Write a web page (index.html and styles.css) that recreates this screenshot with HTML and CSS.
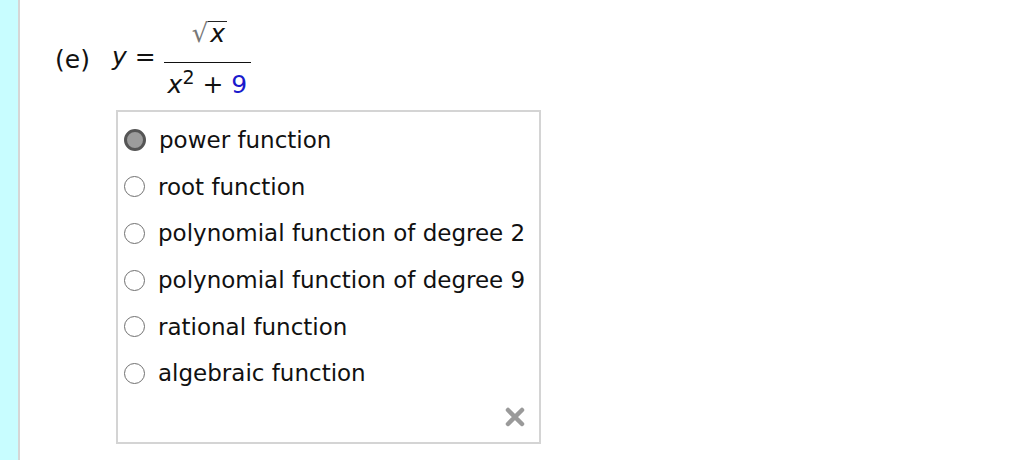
FILE: index.html
```html
<!DOCTYPE html>
<html lang="en">
<head>
    <meta charset="UTF-8">
    <meta name="viewport" content="width=device-width, initial-scale=1.0">
    <title>Question e</title>
    <link rel="stylesheet" href="styles.css">
</head>
<body>
    <div class="side-strip"></div>
    <div class="content">
        <div class="question">
            <span class="part-label">(e)</span>
            <span class="lhs"><i>y</i> =</span>
            <span class="fraction">
                <span class="numer"><span class="radical">&radic;</span><span class="radicand"><i>x</i></span></span>
                <span class="denom"><i>x</i><sup>2</sup> + <span class="blue">9</span></span>
            </span>
        </div>
        <div class="answer-box">
            <label class="option"><span class="radio checked"></span>power function</label>
            <label class="option"><span class="radio"></span>root function</label>
            <label class="option"><span class="radio"></span>polynomial function of degree 2</label>
            <label class="option"><span class="radio"></span>polynomial function of degree 9</label>
            <label class="option"><span class="radio"></span>rational function</label>
            <label class="option"><span class="radio"></span>algebraic function</label>
            <div class="mark-row">
                <svg width="20" height="20" viewBox="0 0 20 20">
                    <path d="M3 3 L17 17 M17 3 L3 17" stroke="#9a9a9a" stroke-width="4.5" stroke-linecap="round"/>
                </svg>
            </div>
        </div>
    </div>
</body>
</html>
```

FILE: styles.css
```css
body {
    margin: 0;
    padding: 0;
    background-color: white;
    display: flex;
    height: 460px;
    font-family: "DejaVu Sans", Verdana, sans-serif;
    color: #111;
    overflow: hidden;
}
.side-strip {
    width: 18px;
    background-color: #c8fdff;
    border-right: 2px solid #d6d6d6; /* thin grey edge */
    flex-shrink: 0;
}
.content {
    padding-left: 35px;
    padding-top: 20px;
}
.question {
    display: flex;
    align-items: center;
    font-size: 25px;
}
.part-label {
    margin-right: 22px;
}
.lhs {
    margin-right: 8px;
    padding-bottom: 6px;
}
.fraction {
    display: inline-flex;
    flex-direction: column;
    align-items: center;
}
.numer {
    display: flex;
    align-items: flex-end;
    padding: 0 0 16px 4px;
    line-height: 26px;
}
.radical {
    font-size: 26px;
    color: #777;
}
.radicand {
    border-top: 1.5px solid #222;
    padding: 0 2px;
    line-height: 24px;
}
.denom {
    border-top: 1.5px solid #111;
    padding: 8px 4px 0 4px;
    line-height: 28px;
}
.denom sup {
    font-size: 19px;
    line-height: 0;
}
.blue {
    color: #1a1acc;
}
.answer-box {
    margin-left: 61px;
    margin-top: 11px;
    width: 421px;
    height: 325px;
    border: 2px solid #d4d4d4;
    padding-top: 5px;
    box-sizing: content-box;
    display: flex;
    flex-direction: column;
}
.option {
    display: flex;
    align-items: center;
    height: 46.6px;
    padding-left: 6px;
    font-size: 23px;
}
.radio {
    width: 19px;
    height: 19px;
    border: 1.5px solid #707070;
    border-radius: 50%;
    margin-right: 13px;
    background: white;
}
.radio.checked {
    width: 16px;
    height: 16px;
    border: 3px solid #555;
    background: #9c9c9c;
}
.mark-row {
    display: flex;
    justify-content: flex-end;
    padding: 10px 14px 0 0;
}
```
